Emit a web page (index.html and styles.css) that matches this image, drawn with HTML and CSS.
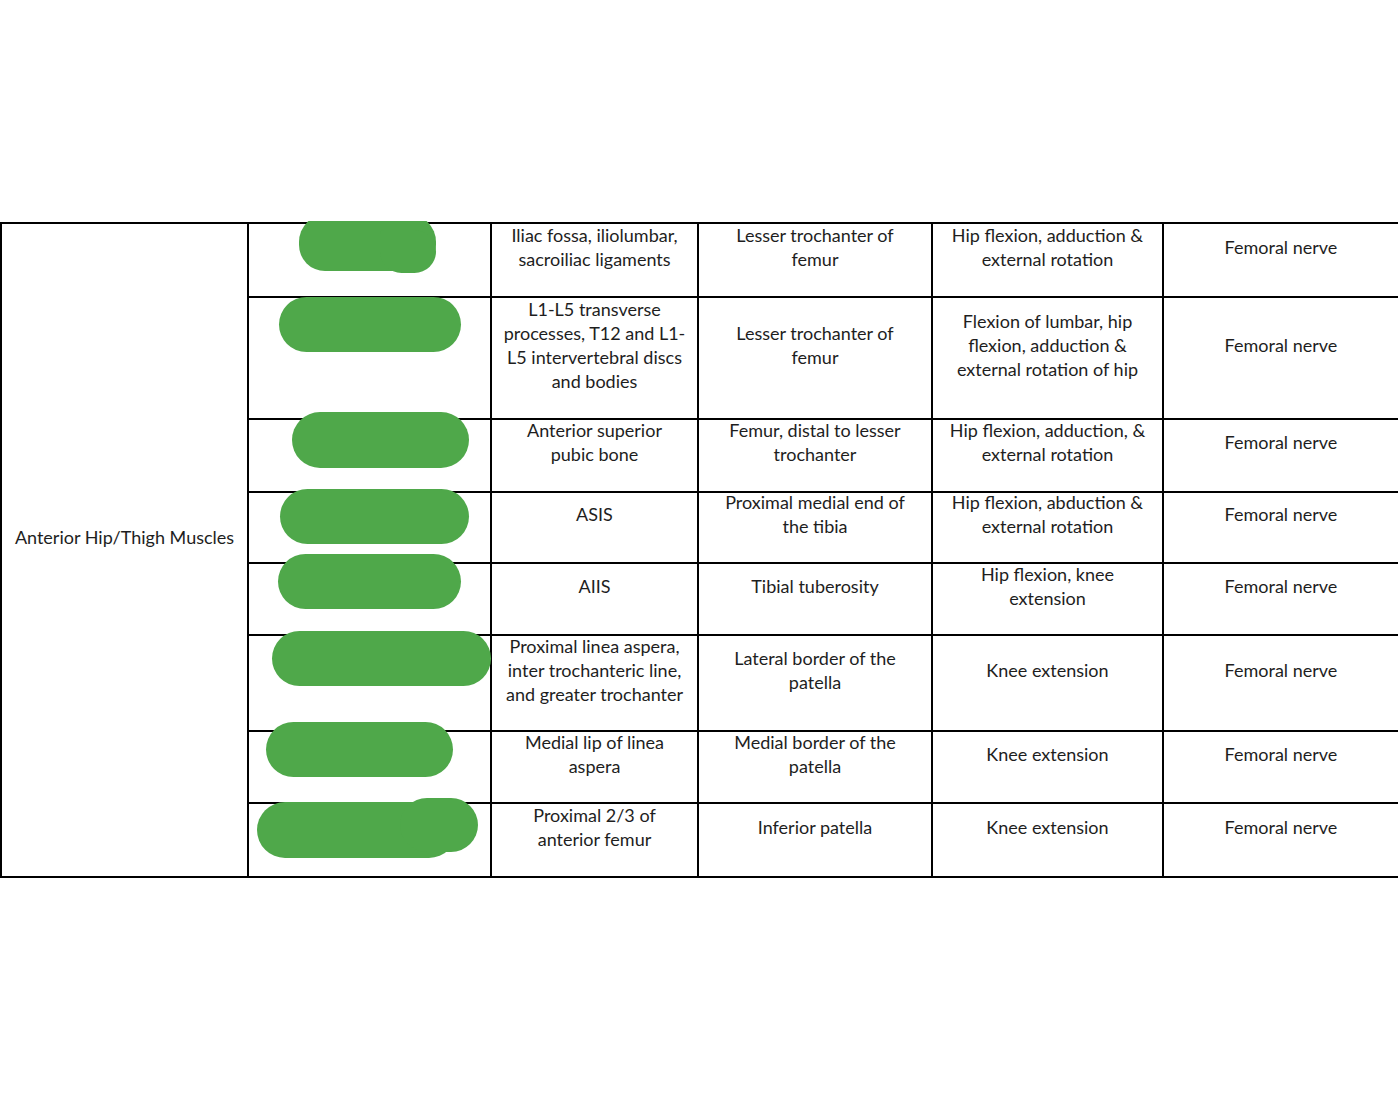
FILE: index.html
```html
<!DOCTYPE html>
<html lang="en">
<head>
<meta charset="utf-8">
<title>Anterior Hip/Thigh Muscles</title>
<link rel="stylesheet" href="styles.css">
</head>
<body>
<div class="sheet">
  <table class="muscles">
    <colgroup>
      <col class="c-group">
      <col class="c-name">
      <col class="c-origin">
      <col class="c-insert">
      <col class="c-action">
      <col class="c-nerve">
    </colgroup>
    <tbody>
      <tr class="r1">
        <td rowspan="8" class="group"><div class="txt">Anterior Hip/Thigh Muscles</div></td>
        <td class="name"></td>
        <td><div class="txt">Iliac fossa, iliolumbar,<br>sacroiliac ligaments</div></td>
        <td><div class="txt">Lesser trochanter of<br>femur</div></td>
        <td><div class="txt">Hip flexion, adduction &amp;<br>external rotation</div></td>
        <td><div class="txt">Femoral nerve</div></td>
      </tr>
      <tr class="r2">
        <td class="name"></td>
        <td><div class="txt">L1-L5 transverse<br>processes, T12 and L1-<br>L5 intervertebral discs<br>and bodies</div></td>
        <td><div class="txt">Lesser trochanter of<br>femur</div></td>
        <td><div class="txt">Flexion of lumbar, hip<br>flexion, adduction &amp;<br>external rotation of hip</div></td>
        <td><div class="txt">Femoral nerve</div></td>
      </tr>
      <tr class="r3">
        <td class="name"></td>
        <td><div class="txt">Anterior superior<br>pubic bone</div></td>
        <td><div class="txt">Femur, distal to lesser<br>trochanter</div></td>
        <td><div class="txt">Hip flexion, adduction, &amp;<br>external rotation</div></td>
        <td><div class="txt">Femoral nerve</div></td>
      </tr>
      <tr class="r4">
        <td class="name"></td>
        <td><div class="txt">ASIS</div></td>
        <td><div class="txt">Proximal medial end of<br>the tibia</div></td>
        <td><div class="txt">Hip flexion, abduction &amp;<br>external rotation</div></td>
        <td><div class="txt">Femoral nerve</div></td>
      </tr>
      <tr class="r5">
        <td class="name"></td>
        <td><div class="txt">AIIS</div></td>
        <td><div class="txt">Tibial tuberosity</div></td>
        <td><div class="txt">Hip flexion, knee<br>extension</div></td>
        <td><div class="txt">Femoral nerve</div></td>
      </tr>
      <tr class="r6">
        <td class="name"></td>
        <td><div class="txt">Proximal linea aspera,<br>inter trochanteric line,<br>and greater trochanter</div></td>
        <td><div class="txt">Lateral border of the<br>patella</div></td>
        <td><div class="txt">Knee extension</div></td>
        <td><div class="txt">Femoral nerve</div></td>
      </tr>
      <tr class="r7">
        <td class="name"></td>
        <td><div class="txt">Medial lip of linea<br>aspera</div></td>
        <td><div class="txt">Medial border of the<br>patella</div></td>
        <td><div class="txt">Knee extension</div></td>
        <td><div class="txt">Femoral nerve</div></td>
      </tr>
      <tr class="r8">
        <td class="name"></td>
        <td><div class="txt">Proximal 2/3 of<br>anterior femur</div></td>
        <td><div class="txt">Inferior patella</div></td>
        <td><div class="txt">Knee extension</div></td>
        <td><div class="txt">Femoral nerve</div></td>
      </tr>
    </tbody>
  </table>

  <div class="blob b1"></div>
  <div class="blob b1x"></div>
  <div class="blob b2"></div>
  <div class="blob b3"></div>
  <div class="blob b4"></div>
  <div class="blob b5"></div>
  <div class="blob b6"></div>
  <div class="blob b7"></div>
  <div class="blob b8"></div>
  <div class="blob b8x"></div>
</div>
</body>
</html>
```

FILE: styles.css
```css
html, body {
  margin: 0;
  padding: 0;
  background: #ffffff;
}

body {
  font-family: "Lato", "Open Sans", "Liberation Sans", sans-serif;
  color: #1e1e1e;
}

.sheet {
  position: relative;
  margin-top: 221px;
  width: 1398px;
  overflow: hidden;
  padding-top: 1px;
}

.muscles {
  border-collapse: collapse;
  table-layout: fixed;
  width: 1398px;
}

.c-group { width: 247px; }
.c-name { width: 243px; }
.c-origin { width: 207px; }
.c-insert { width: 234px; }
.c-action { width: 231px; }
.c-nerve { width: 236px; }

.muscles td {
  border: 2px solid #000000;
  padding: 0 2px 24px;
  text-align: center;
  vertical-align: middle;
  font-size: 18px;
  line-height: 24px;
  white-space: nowrap;
}

.muscles td.group {
  padding-left: 4px;
  padding-right: 4px;
}

.txt {
  margin-top: -3px;
}

.r1 { height: 74px; }
.r2 { height: 122px; }
.r3 { height: 73px; }
.r4 { height: 71px; }
.r5 { height: 72px; }
.r6 { height: 96px; }
.r7 { height: 72px; }
.r8 { height: 74px; }

/* redaction marks drawn over the names column */
.blob {
  position: absolute;
  background: #4fa84a;
  border-radius: 28px;
}

.b1 { left: 299px; top: -7px; width: 137px; height: 57px; border-radius: 28px 28px 26px 26px; }
.b1x { left: 380px; top: 9px; width: 56px; height: 43px; border-radius: 4px 22px 22px 22px; }
.b2 { left: 279px; top: 76px; width: 182px; height: 55px; }
.b3 { left: 292px; top: 191px; width: 177px; height: 56px; }
.b4 { left: 280px; top: 268px; width: 189px; height: 55px; }
.b5 { left: 278px; top: 333px; width: 183px; height: 55px; }
.b6 { left: 272px; top: 410px; width: 219px; height: 55px; }
.b7 { left: 266px; top: 501px; width: 187px; height: 55px; }
.b8 { left: 257px; top: 581px; width: 200px; height: 56px; }
.b8x { left: 400px; top: 577px; width: 78px; height: 54px; }
```
